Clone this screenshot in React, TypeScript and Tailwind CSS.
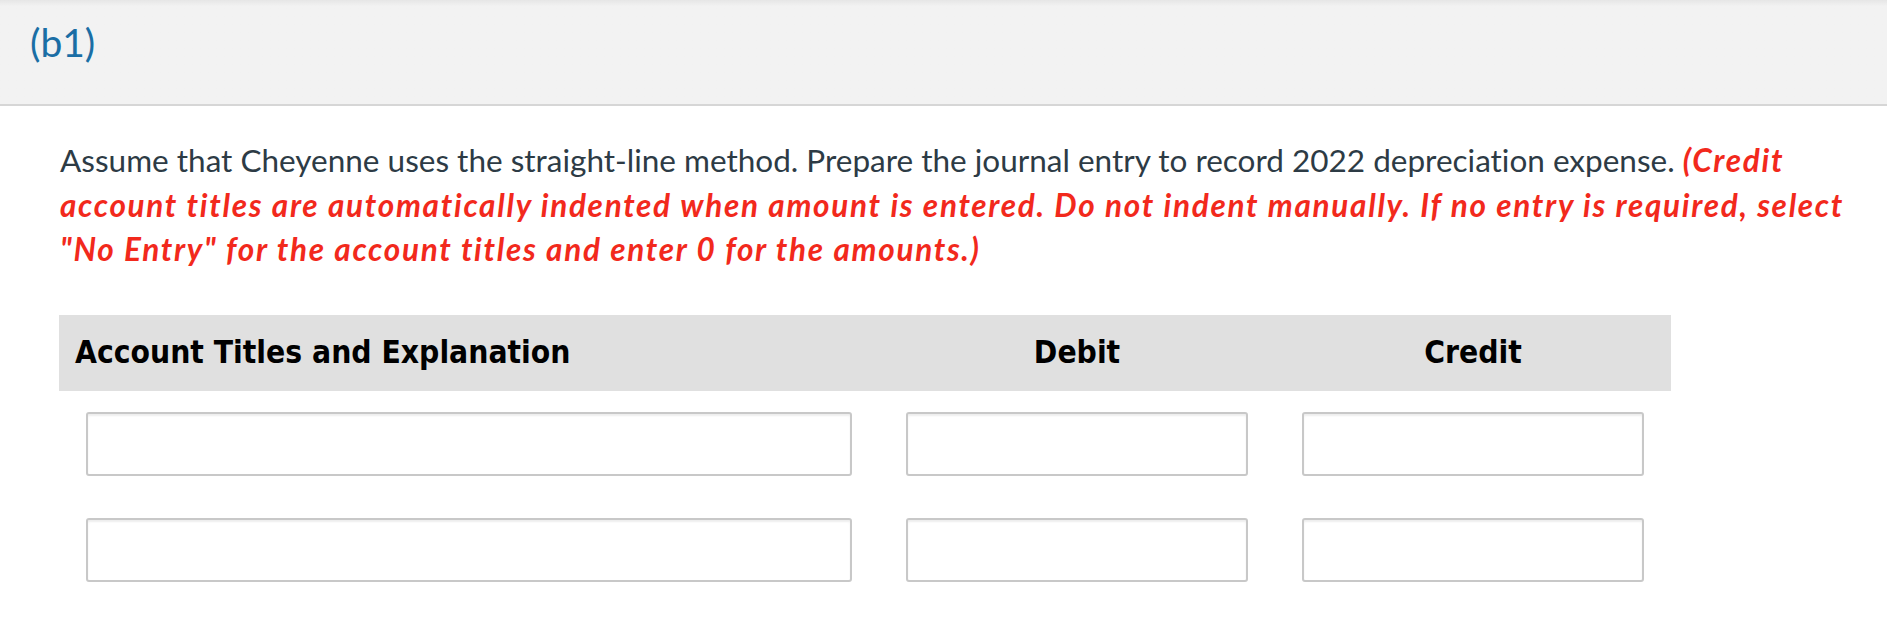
import React from "react";

const lato = { fontFamily: "Lato, 'Open Sans', sans-serif" };

function Field() {
  return (
    <div className="h-[64px] w-full rounded-[3px] border-2 border-[#c8c8c8] bg-white shadow-[inset_0_2px_2px_rgba(0,0,0,0.07)]" />
  );
}

function Row() {
  return (
    <div className="flex">
      <div className="w-[820px] px-[27px]">
        <Field />
      </div>
      <div className="w-[396px] px-[27px]">
        <Field />
      </div>
      <div className="w-[396px] px-[27px]">
        <Field />
      </div>
    </div>
  );
}

export default function App() {
  return (
    <div className="min-h-[634px] w-[1887px] bg-white [font-variant-ligatures:none]" style={lato}>
      <div className="h-[106px] border-b-2 border-[#d6d6d6] bg-gradient-to-b from-[#e6e6e6] via-[#f2f2f2] via-[6%] to-[#f2f2f2] pl-[30px] pt-[16px]">
        <div className="font-['Lato',sans-serif] text-[39px] leading-[52px] text-[#1a6ea5]">(b1)</div>
      </div>
      <div className="pl-[60px] pt-[32px] font-['Lato',sans-serif] text-[31.5px] leading-[44.5px] text-[#2d3b45] whitespace-nowrap">
        Assume that Cheyenne uses the straight-line method. Prepare the journal entry to record 2022 depreciation expense.{" "}
        <span className="font-bold italic tracking-[1.7px] text-[#f2291c]">
          (Credit
          <br />
          account titles are automatically indented when amount is entered. Do not indent manually. If no entry is required, select
          <br />
          "No Entry" for the account titles and enter 0 for the amounts.)
        </span>
      </div>
      <div className="ml-[59px] mt-[43px] w-[1612px]">
        <div className="flex h-[76px] items-center bg-[#e0e0e0] font-['DejaVu_Sans_Condensed','DejaVu_Sans',sans-serif] text-[31.5px] font-bold text-black">
          <div className="w-[820px] pl-[16px]">Account Titles and Explanation</div>
          <div className="w-[396px] text-center">Debit</div>
          <div className="w-[396px] text-center">Credit</div>
        </div>
        <div className="flex flex-col gap-[42px] pt-[21px]">
          <Row />
          <Row />
        </div>
      </div>
    </div>
  );
}
